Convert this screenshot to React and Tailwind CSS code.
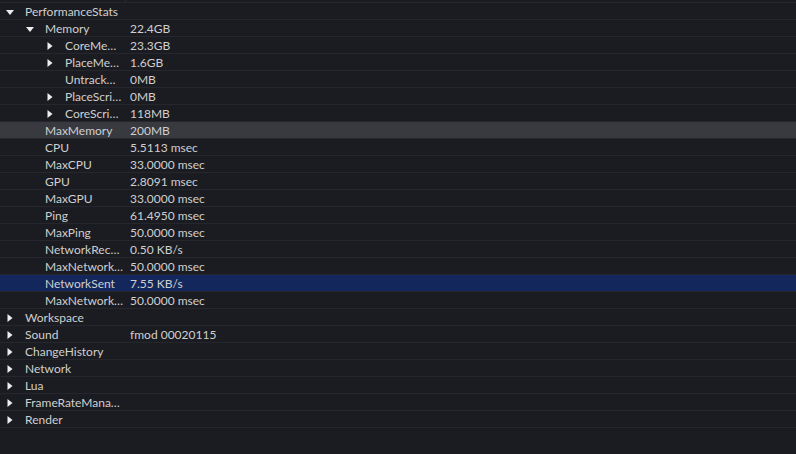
import React from "react";

const rows = [
  { n: "PerformanceStats", v: "", l: 0, a: "down" },
  { n: "Memory", v: "22.4GB", l: 1, a: "down" },
  { n: "CoreMe…", v: "23.3GB", l: 2, a: "right" },
  { n: "PlaceMe…", v: "1.6GB", l: 2, a: "right" },
  { n: "Untrack…", v: "0MB", l: 2, a: null },
  { n: "PlaceScri…", v: "0MB", l: 2, a: "right" },
  { n: "CoreScri…", v: "118MB", l: 2, a: "right" },
  { n: "MaxMemory", v: "200MB", l: 1, a: null, hover: true },
  { n: "CPU", v: "5.5113 msec", l: 1, a: null },
  { n: "MaxCPU", v: "33.0000 msec", l: 1, a: null },
  { n: "GPU", v: "2.8091 msec", l: 1, a: null },
  { n: "MaxGPU", v: "33.0000 msec", l: 1, a: null },
  { n: "Ping", v: "61.4950 msec", l: 1, a: null },
  { n: "MaxPing", v: "50.0000 msec", l: 1, a: null },
  { n: "NetworkRec…", v: "0.50 KB/s", l: 1, a: null },
  { n: "MaxNetwork…", v: "50.0000 msec", l: 1, a: null },
  { n: "NetworkSent", v: "7.55 KB/s", l: 1, a: null, sel: true },
  { n: "MaxNetwork…", v: "50.0000 msec", l: 1, a: null },
  { n: "Workspace", v: "", l: 0, a: "right" },
  { n: "Sound", v: "fmod 00020115", l: 0, a: "right" },
  { n: "ChangeHistory", v: "", l: 0, a: "right" },
  { n: "Network", v: "", l: 0, a: "right" },
  { n: "Lua", v: "", l: 0, a: "right" },
  { n: "FrameRateMana…", v: "", l: 0, a: "right" },
  { n: "Render", v: "", l: 0, a: "right" },
];

const indent = ["pl-[5px]", "pl-[25px]", "pl-[45px]"];

function Arrow({ dir }) {
  if (dir === "down")
    return (
      <svg width="20" height="17" viewBox="0 0 20 17" className="shrink-0">
        <polygon points="1,7 9,7 5,12" fill="#ededed" />
      </svg>
    );
  if (dir === "right")
    return (
      <svg width="20" height="17" viewBox="0 0 20 17" className="shrink-0">
        <polygon points="2.5,5 7.5,9 2.5,13" fill="#ededed" />
      </svg>
    );
  return <span className="w-[20px] shrink-0" />;
}

export default function App() {
  return (
    <div
      className="w-[796px] h-[454px] bg-[#1b1c21] overflow-hidden text-[12px] text-[#cfcfcf]"
      style={{ fontFamily: 'Lato, "Noto Sans", sans-serif' }}
    >
      <div className="h-[3px] flex border-b border-[#26272c]">
        <div className="w-[126px] border-r border-[#2a2b30]" />
      </div>
      {rows.map((r, i) => (
        <div
          key={i}
          className={`h-[17px] flex items-center border-b border-[#26272c] ${
            r.sel ? "bg-[#14275c]" : r.hover ? "bg-[#393a40]" : ""
          }`}
        >
          <div className={`w-[126px] shrink-0 flex items-center ${indent[r.l]}`}>
            <Arrow dir={r.a} />
            <span className="whitespace-nowrap leading-[16px] pt-[1px]">{r.n}</span>
          </div>
          <div className="pl-[4px] leading-[16px] pt-[1px] whitespace-nowrap">{r.v}</div>
        </div>
      ))}
    </div>
  );
}
